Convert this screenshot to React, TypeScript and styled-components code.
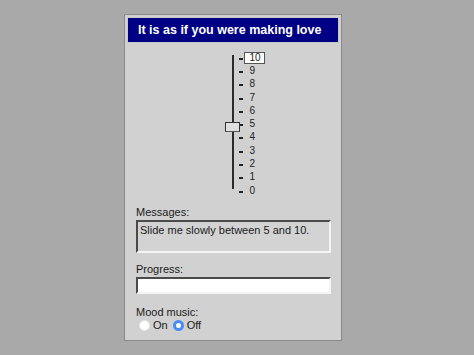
import styled, { createGlobalStyle } from "styled-components";

const GlobalStyle = createGlobalStyle`
    html, body {
        margin: 0;
        padding: 0;
        background: #a9a9a9;
        font-family: "Liberation Sans", Arial, sans-serif;
    }
`;

const values = [10, 9, 8, 7, 6, 5, 4, 3, 2, 1, 0];

function App() {
    const current = 5;
    const thumbTop = ((10 - current) / 10) * 133;

    return (
        <Page>
            <GlobalStyle />
            <Panel>
                <TitleBar>It is as if you were making love</TitleBar>
                <Body>
                    <SliderWrap>
                        <Track>
                            <Thumb style={{ top: thumbTop }} />
                        </Track>
                        <Scale>
                            {values.map((v) => (
                                <TickRow key={v}>
                                    <Tick />
                                    <TickLabel $boxed={v === 10}>{v}</TickLabel>
                                </TickRow>
                            ))}
                        </Scale>
                    </SliderWrap>

                    <Field $gap={10}>
                        <Label>Messages:</Label>
                        <Messages>Slide me slowly between 5 and 10.</Messages>
                    </Field>

                    <Field $gap={12}>
                        <Label>Progress:</Label>
                        <Progress />
                    </Field>

                    <Field $gap={0}>
                        <Label>Mood music:</Label>
                        <Radios>
                            <Radio $checked={false} />
                            <RadioText>On</RadioText>
                            <Radio $checked />
                            <RadioText>Off</RadioText>
                        </Radios>
                    </Field>
                </Body>
            </Panel>
        </Page>
    );
}

const Page = styled.div`
    width: 474px;
    height: 355px;
    display: flex;
    padding: 14px 0 0 124px;
    box-sizing: border-box;
`;

const Panel = styled.div`
    width: 218px;
    height: 327px;
    box-sizing: border-box;
    background: #d1d1d1;
    border: 1px solid #8a8a8a;
    padding: 2px;
    display: flex;
    flex-direction: column;
`;

const TitleBar = styled.div`
    background: #000085;
    color: #fff;
    font-weight: bold;
    font-size: 12.5px;
    height: 24px;
    line-height: 25px;
    padding-left: 10px;
    border: 1px solid #c8c8c8;
`;

const Body = styled.div`
    padding: 8px 8px 0 9px;
    display: flex;
    flex-direction: column;
`;

const SliderWrap = styled.div`
    display: flex;
    justify-content: center;
    padding-left: 30px;
    margin-bottom: 9px;
`;

const Track = styled.div`
    position: relative;
    width: 2px;
    height: 134px;
    background: #2b2b2b;
    margin-top: 4px;
    margin-right: 5px;
`;

const Thumb = styled.div`
    position: absolute;
    left: -7px;
    width: 13px;
    height: 8px;
    background: #e0e0e0;
    border: 1px solid #333;
    border-bottom-color: #555;
`;

const Scale = styled.div`
    display: flex;
    flex-direction: column;
`;

const TickRow = styled.div`
    display: flex;
    align-items: center;
    height: 13.3px;
`;

const Tick = styled.div`
    width: 4px;
    height: 2px;
    background: #222;
    margin-right: 6px;
    margin-top: 2px;
`;

const TickLabel = styled.span<{ $boxed?: boolean }>`
    font-size: 10px;
    color: #222;
    line-height: 10px;
    ${({ $boxed }) =>
        $boxed
            ? `
        background: #fff;
        border: 1px solid #555;
        padding: 0 3px 0 4px;
        margin-left: -5px;
    `
            : ""}
`;

const Field = styled.div<{ $gap: number }>`
    display: flex;
    flex-direction: column;
    margin-bottom: ${({ $gap }) => $gap}px;
`;

const Label = styled.div`
    font-size: 11px;
    color: #1a1a1a;
    line-height: 13px;
    margin-bottom: 1px;
`;

const Messages = styled.div`
    height: 25px;
    border: 2px solid;
    border-color: #4a4a4a #f4f4f4 #f4f4f4 #4a4a4a;
    background: #d3d3d3;
    font-size: 11px;
    color: #1a1a1a;
    padding: 2px 2px;
    line-height: 13px;
`;

const Progress = styled.div`
    height: 13px;
    border: 2px solid;
    border-color: #4a4a4a #f4f4f4 #f4f4f4 #4a4a4a;
    background: #fff;
`;

const Radios = styled.div`
    display: flex;
    align-items: center;
    margin-top: -1px;
    padding-left: 2px;
`;

const Radio = styled.span<{ $checked?: boolean }>`
    width: 11px;
    height: 11px;
    border-radius: 50%;
    box-sizing: border-box;
    margin: 0 3px 0 1px;
    background: #fff;
    border: ${({ $checked }) => ($checked ? "3px solid #4a8cf5" : "1px solid #e8e8e8")};
`;

const RadioText = styled.span`
    font-size: 11px;
    color: #1a1a1a;
    margin-right: 4px;
`;

export default App;
